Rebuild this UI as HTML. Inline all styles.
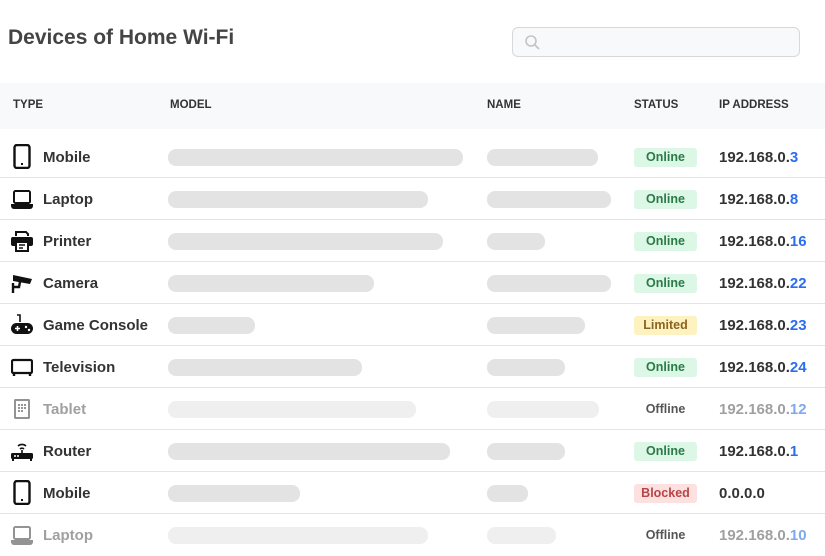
<!DOCTYPE html>
<html><head><meta charset="utf-8"><style>
*{margin:0;padding:0;box-sizing:border-box}
body{width:825px;height:548px;overflow:hidden;background:#fff;font-family:"Liberation Sans",sans-serif;position:relative;color:#333}
.t{position:absolute;left:8px;top:26px;font-size:21px;font-weight:bold;color:#444}
.s{position:absolute;left:512px;top:27px;width:288px;height:30px;border:1px solid #d8d8d8;border-radius:6px;background:#f8f9fa}
.hd{position:absolute;left:0;top:83px;width:825px;height:46px;background:#f8f9fa}
.hd span{position:absolute;top:16px;font-size:11.5px;font-weight:bold;color:#333}
.r{position:absolute;left:0;width:825px;height:42px}
.r .d{position:absolute;left:0;right:0;bottom:0;height:1px;background:#e4e4e4}
.ic{position:absolute;left:11px;top:10px;width:22px;height:22px}
.n{position:absolute;left:43px;top:13px;font-size:15px;font-weight:bold}
.b{position:absolute;top:13px;height:17px;border-radius:8px;background:#e3e3e3}
.st{position:absolute;left:634px;top:12px;width:63px;height:19px;border-radius:3px;font-size:12.5px;font-weight:bold;text-align:center;line-height:19px}
.on{background:#dcf7e6;color:#2a7a47}.li{background:#fdf2c0;color:#8a6420}.bl{background:#fde0e0;color:#b84545}.of{color:#555}
.ip{position:absolute;left:719px;top:13px;font-size:15px;font-weight:bold}
.ip b{color:#2a6df0}
.off .n,.off .ip{color:#a0a0a0}.off .ip b{color:#7fa8f0}.off .b{background:#efefef}.off .ic{opacity:.45}
</style></head><body>
<div class="t">Devices of Home Wi-Fi</div>
<div class="s"><svg style="position:absolute;left:11px;top:6px" width="17" height="17" viewBox="0 0 17 17"><circle cx="7" cy="7" r="5" fill="none" stroke="#c4c4c4" stroke-width="1.6"/><path d="M10.5 10.5L15 15" stroke="#c4c4c4" stroke-width="1.8"/></svg></div>
<div class="hd"><span style="left:13px">TYPE</span><span style="left:170px">MODEL</span><span style="left:487px">NAME</span><span style="left:634px">STATUS</span><span style="left:719px">IP ADDRESS</span></div>

<div class="r" style="top:136px"><svg class="ic" style="top:8px;height:25px" viewBox="0 0 22 25"><rect x="3.5" y="1" width="15" height="23" rx="2.5" fill="none" stroke="#111" stroke-width="2.4"/><rect x="10" y="19" width="2" height="2" fill="#111"/></svg><div class="n">Mobile</div><div class="b" style="left:168px;width:295px"></div><div class="b" style="left:487px;width:111px"></div><div class="st on">Online</div><div class="ip">192.168.0.<b>3</b></div><div class="d"></div></div>

<div class="r" style="top:178px"><svg class="ic" viewBox="0 0 22 22"><rect x="3" y="3" width="16" height="12" rx="1.5" fill="none" stroke="#111" stroke-width="2"/><path d="M0 16h22v2a3 3 0 0 1-3 3H3a3 3 0 0 1-3-3z" fill="#111"/></svg><div class="n">Laptop</div><div class="b" style="left:168px;width:260px"></div><div class="b" style="left:487px;width:124px"></div><div class="st on">Online</div><div class="ip">192.168.0.<b>8</b></div><div class="d"></div></div>

<div class="r" style="top:220px"><svg class="ic" viewBox="0 0 22 22"><path d="M5 6V2h10l2 2v2" fill="none" stroke="#111" stroke-width="2"/><rect x="0" y="7" width="22" height="9" rx="2" fill="#111"/><rect x="5" y="12" width="12" height="9" fill="#fff" stroke="#111" stroke-width="2"/><path d="M8 15h6M8 18h4" stroke="#111" stroke-width="1.4"/></svg><div class="n">Printer</div><div class="b" style="left:168px;width:275px"></div><div class="b" style="left:487px;width:58px"></div><div class="st on">Online</div><div class="ip">192.168.0.<b>16</b></div><div class="d"></div></div>

<div class="r" style="top:262px"><svg class="ic" viewBox="0 0 22 22"><path d="M2 3l19 4-2 5-17-3z" fill="#111"/><path d="M9 10l-1 5H3M2 11v10" stroke="#111" stroke-width="2.4" fill="none"/></svg><div class="n">Camera</div><div class="b" style="left:168px;width:206px"></div><div class="b" style="left:487px;width:124px"></div><div class="st on">Online</div><div class="ip">192.168.0.<b>22</b></div><div class="d"></div></div>

<div class="r" style="top:304px"><svg class="ic" viewBox="0 0 22 22"><path d="M6 1h3v7" fill="none" stroke="#111" stroke-width="1.6"/><rect x="0" y="9" width="22" height="11" rx="5.5" fill="#111"/><path d="M4 14.5h5M6.5 12v5" stroke="#fff" stroke-width="1.5"/><circle cx="15" cy="13" r="1.2" fill="#fff"/><circle cx="18" cy="16" r="1.2" fill="#fff"/></svg><div class="n">Game Console</div><div class="b" style="left:168px;width:87px"></div><div class="b" style="left:487px;width:98px"></div><div class="st li">Limited</div><div class="ip">192.168.0.<b>23</b></div><div class="d"></div></div>

<div class="r" style="top:346px"><svg class="ic" viewBox="0 0 22 22"><rect x="1" y="4" width="20" height="13" rx="1.5" fill="none" stroke="#111" stroke-width="2.2"/><path d="M3 17v3M19 17v3" stroke="#111" stroke-width="2.4"/></svg><div class="n">Television</div><div class="b" style="left:168px;width:194px"></div><div class="b" style="left:487px;width:78px"></div><div class="st on">Online</div><div class="ip">192.168.0.<b>24</b></div><div class="d"></div></div>

<div class="r off" style="top:388px"><svg class="ic" viewBox="0 0 22 22"><rect x="3" y="1" width="16" height="20" rx="1.5" fill="#111"/><rect x="5" y="3" width="12" height="16" fill="#fff"/><g fill="#111"><rect x="7" y="6" width="2" height="2"/><rect x="10" y="6" width="2" height="2"/><rect x="13" y="6" width="2" height="2"/><rect x="7" y="9" width="2" height="2"/><rect x="10" y="9" width="2" height="2"/><rect x="13" y="9" width="2" height="2"/><rect x="7" y="12" width="2" height="2"/><rect x="10" y="12" width="2" height="2"/></g></svg><div class="n">Tablet</div><div class="b" style="left:168px;width:248px"></div><div class="b" style="left:487px;width:112px"></div><div class="st of">Offline</div><div class="ip">192.168.0.<b>12</b></div><div class="d"></div></div>

<div class="r" style="top:430px"><svg class="ic" viewBox="0 0 22 22"><path d="M7 6a6 6 0 0 1 8 0M9 9a3 3 0 0 1 4 0" fill="none" stroke="#111" stroke-width="1.6"/><path d="M11 10v4" stroke="#111" stroke-width="1.6"/><rect x="0" y="13" width="22" height="6" rx="1.5" fill="#111"/><path d="M2 19v2M20 19v2" stroke="#111" stroke-width="2"/><circle cx="4" cy="16" r="1" fill="#fff"/><circle cx="7" cy="16" r="1" fill="#fff"/></svg><div class="n">Router</div><div class="b" style="left:168px;width:282px"></div><div class="b" style="left:487px;width:78px"></div><div class="st on">Online</div><div class="ip">192.168.0.<b>1</b></div><div class="d"></div></div>

<div class="r" style="top:472px"><svg class="ic" style="top:8px;height:25px" viewBox="0 0 22 25"><rect x="3.5" y="1" width="15" height="23" rx="2.5" fill="none" stroke="#111" stroke-width="2.4"/><rect x="10" y="19" width="2" height="2" fill="#111"/></svg><div class="n">Mobile</div><div class="b" style="left:168px;width:132px"></div><div class="b" style="left:487px;width:41px"></div><div class="st bl">Blocked</div><div class="ip">0.0.0.0</div><div class="d"></div></div>

<div class="r off" style="top:514px"><svg class="ic" viewBox="0 0 22 22"><rect x="3" y="3" width="16" height="12" rx="1.5" fill="none" stroke="#111" stroke-width="2"/><path d="M0 16h22v2a3 3 0 0 1-3 3H3a3 3 0 0 1-3-3z" fill="#111"/></svg><div class="n">Laptop</div><div class="b" style="left:168px;width:260px"></div><div class="b" style="left:487px;width:69px"></div><div class="st of">Offline</div><div class="ip">192.168.0.<b>10</b></div></div>
</body></html>
